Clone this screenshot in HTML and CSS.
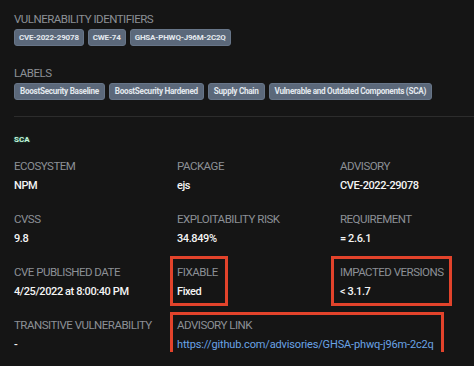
FILE: index.html
```html
<!DOCTYPE html>
<html lang="en">
<head>
  <meta charset="UTF-8">
  <meta name="viewport" content="width=device-width, initial-scale=1.0">
  <title>Finding details</title>
  <link rel="stylesheet" href="styles.css">
</head>
<body>
  <div class="page">
    <!-- identifiers -->
    <section class="group">
      <p class="group-title">VULNERABILITY IDENTIFIERS</p>
      <div class="chips">
        <span class="chip chip-id">CVE-2022-29078</span>
        <span class="chip chip-id">CWE-74</span>
        <span class="chip chip-id">GHSA-PHWQ-J96M-2C2Q</span>
      </div>
    </section>

    <!-- labels -->
    <section class="group group-labels">
      <p class="group-title">LABELS</p>
      <div class="chips">
        <span class="chip">BoostSecurity Baseline</span>
        <span class="chip">BoostSecurity Hardened</span>
        <span class="chip">Supply Chain</span>
        <span class="chip">Vulnerable and Outdated Components (SCA)</span>
      </div>
    </section>

    <hr class="divider">

    <p class="section-tag">SCA</p>

    <div class="fields">
      <div class="field">
        <p class="field-label">ECOSYSTEM</p>
        <p class="field-value">NPM</p>
      </div>
      <div class="field">
        <p class="field-label">PACKAGE</p>
        <p class="field-value">ejs</p>
      </div>
      <div class="field">
        <p class="field-label">ADVISORY</p>
        <p class="field-value">CVE-2022-29078</p>
      </div>

      <div class="field">
        <p class="field-label">CVSS</p>
        <p class="field-value">9.8</p>
      </div>
      <div class="field">
        <p class="field-label">EXPLOITABILITY RISK</p>
        <p class="field-value">34.849%</p>
      </div>
      <div class="field">
        <p class="field-label">REQUIREMENT</p>
        <p class="field-value">= 2.6.1</p>
      </div>

      <div class="field">
        <p class="field-label">CVE PUBLISHED DATE</p>
        <p class="field-value">4/25/2022 at 8:00:40 PM</p>
      </div>
      <div class="field mark mark-fix">
        <p class="field-label">FIXABLE</p>
        <p class="field-value">Fixed</p>
      </div>
      <div class="field mark mark-impact">
        <p class="field-label">IMPACTED VERSIONS</p>
        <p class="field-value">&lt; 3.1.7</p>
      </div>

      <div class="field">
        <p class="field-label">TRANSITIVE VULNERABILITY</p>
        <p class="field-value">-</p>
      </div>
      <div class="field field-wide mark mark-link">
        <p class="field-label">ADVISORY LINK</p>
        <p class="field-value"><a href="#">https://github.com/advisories/GHSA-phwq-j96m-2c2q</a></p>
      </div>
    </div>
  </div>
</body>
</html>
```

FILE: styles.css
```css
/* page */
* {
  box-sizing: border-box;
}
body {
  margin: 0;
  background: #151515;
  color: #f2f2f2;
  font-family: Roboto, "Noto Sans", sans-serif;
}
p {
  margin: 0;
}
.page {
  padding: 12px 0 0 14px;
}

/* label groups */
.group-title {
  font-size: 11.5px;
  line-height: 14px;
  letter-spacing: -0.5px;
  color: #8c9096;
}
.chips {
  display: flex;
  gap: 4px;
  margin-top: 3px;
}
.chip {
  flex-shrink: 0;
  white-space: nowrap;
  height: 17px;
  line-height: 15px;
  padding: 0 5px;
  font-size: 8.2px;
  font-weight: 700;
  letter-spacing: -0.3px;
  color: #e3e8ee;
  background: #5b687a;
  border: 1px solid #677588;
  border-radius: 3px;
}
.chip-id {
  font-size: 8px;
  letter-spacing: -0.2px;
  padding: 0 4px;
}
.group-labels {
  margin-top: 20px;
}

/* divider */
.divider {
  border: none;
  border-top: 1px solid #2c2c2c;
  margin: 16px 0 0 0;
}

/* section tag */
.section-tag {
  margin-top: 18px;
  font-size: 8px;
  line-height: 10px;
  font-weight: 700;
  color: #c4f2dc;
  text-shadow: 0 0 2px rgba(60, 200, 140, 0.6);
}

/* field grid */
.fields {
  display: grid;
  grid-template-columns: 163px 163px 120px;
  row-gap: 19px;
  margin-top: 14px;
}
.field-label {
  font-size: 11.5px;
  line-height: 14px;
  letter-spacing: -0.5px;
  color: #8c9096;
}
.field-value {
  margin-top: 5px;
  font-size: 11px;
  line-height: 15px;
  font-weight: 500;
  letter-spacing: -0.4px;
  color: #f4f4f4;
}
.field-value a {
  color: #6aa3e6;
  font-weight: 400;
  letter-spacing: -0.15px;
  text-decoration: none;
}
.field-wide {
  grid-column: span 2;
}

/* red annotation boxes */
.mark {
  position: relative;
  justify-self: start;
  width: fit-content;
}
.mark::after {
  content: '';
  position: absolute;
  top: -9px;
  bottom: -7px;
  left: -7px;
  right: -10px;
  border: 3px solid #e2432b;
}
.mark-impact::after {
  left: -9px;
  right: -8px;
}
.mark-link::after {
  top: -6px;
  bottom: -10px;
  right: -10px;
}
```
